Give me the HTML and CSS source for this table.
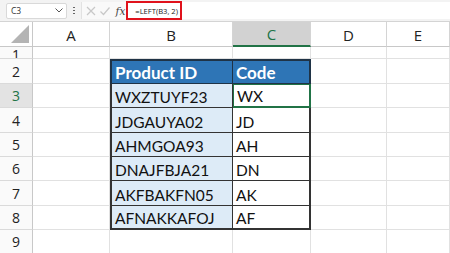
FILE: index.html
```html
<!DOCTYPE html>
<html>
<head>
<meta charset="utf-8">
<link rel="stylesheet" href="styles.css">
</head>
<body>
<div class="fbar">
  <div class="namebox"><span>C3</span>
    <svg class="chev" width="8" height="5" viewBox="0 0 8 5"><path d="M0.5 0.5 L4 4 L7.5 0.5" fill="none" stroke="#555" stroke-width="1"/></svg>
  </div>
  <div class="dots"><i></i><i></i><i></i></div>
  <div class="tools">
    <svg class="ic" width="12" height="12" viewBox="0 0 12 12"><path d="M2 2 L10 10 M10 2 L2 10" stroke="#c8c8c8" stroke-width="1.2"/></svg>
    <svg class="ic" width="12" height="12" viewBox="0 0 12 12"><path d="M1.5 6.5 L4.5 9.5 L10.5 2.5" fill="none" stroke="#c8c8c8" stroke-width="1.2"/></svg>
    <span class="fx">fx</span>
  </div>
  <div class="formula"><span class="fbox">=LEFT(B3, 2)</span></div>
</div>
<div class="sheet">
  <div class="corner"><div class="tri"></div></div>
  <div class="ch">A</div><div class="ch">B</div><div class="ch sel">C</div><div class="ch">D</div><div class="ch">E</div>

  <div class="rh r1"><span>1</span></div><div class="c r1"></div><div class="c r1"></div><div class="c r1"></div><div class="c r1"></div><div class="c r1"></div>

  <div class="rh">2</div><div class="c"></div><div class="c th tl">Product ID</div><div class="c th tr">Code</div><div class="c"></div><div class="c"></div>
  <div class="rh rsel">3</div><div class="c"></div><div class="c tb">WXZTUYF23</div><div class="c tc active">WX</div><div class="c"></div><div class="c"></div>
  <div class="rh">4</div><div class="c"></div><div class="c tb">JDGAUYA02</div><div class="c tc">JD</div><div class="c"></div><div class="c"></div>
  <div class="rh">5</div><div class="c"></div><div class="c tb">AHMGOA93</div><div class="c tc">AH</div><div class="c"></div><div class="c"></div>
  <div class="rh">6</div><div class="c"></div><div class="c tb">DNAJFBJA21</div><div class="c tc">DN</div><div class="c"></div><div class="c"></div>
  <div class="rh">7</div><div class="c"></div><div class="c tb">AKFBAKFN05</div><div class="c tc">AK</div><div class="c"></div><div class="c"></div>
  <div class="rh">8</div><div class="c"></div><div class="c tb last">AFNAKKAFOJ</div><div class="c tc last">AF</div><div class="c"></div><div class="c"></div>
  <div class="rh">9</div><div class="c"></div><div class="c"></div><div class="c"></div><div class="c"></div><div class="c"></div>
</div>
</body>
</html>
```
FILE: styles.css
```css
* { box-sizing: border-box; }
html, body { margin: 0; padding: 0; }
body {
  width: 450px; height: 253px; overflow: hidden;
  background: #fff;
  font-family: "Open Sans", "Liberation Sans", sans-serif;
}
.fbar {
  height: 22px;
  background: #f3f3f3;
  display: flex; align-items: center;
  padding-left: 6px;
  border-bottom: 1px solid #d4d4d4;
}
.namebox {
  width: 61px; height: 16px;
  background: #fff;
  border: 1px solid #d9d9d9;
  border-radius: 2px;
  display: flex; align-items: center; justify-content: space-between;
  padding: 0 3px 0 4px;
  font-size: 8.5px; color: #333;
}
.dots { display: flex; flex-direction: column; gap: 1.5px; margin: 0 6px 0 6px; }
.dots i { width: 1.5px; height: 1.5px; background: #666; display: block; }
.tools {
  display: flex; align-items: center;
  height: 17px;
  background: #f9f9f9;
  border-left: 1px solid #e2e2e2;
  padding-left: 3px;
}
.ic { margin-right: 2px; }
.fx {
  font-family: "DejaVu Serif", "Liberation Serif", serif;
  font-style: italic; font-size: 10.5px; color: #444;
  margin: 0 1px 0 3px;
}
.formula {
  flex: 1; height: 17px; background: #fff;
  display: flex; align-items: center;
}
.fbox {
  height: 19px;
  border: 2px solid #e0121c;
  padding: 0 2px 0 7px;
  font-size: 7.6px; color: #222;
  display: inline-flex; align-items: center;
}
.sheet {
  display: grid;
  grid-template-columns: 33px 77px 123px 78px 76px 63px;
  grid-template-rows: 25px 12px 25px 24px 25px 24px 24px 25px 24px 24px;
}
.corner {
  background: #fff;
  border-right: 1px solid #c8c8c8;
  border-bottom: 1px solid #c8c8c8;
  position: relative;
}
.tri {
  position: absolute; right: 3px; bottom: 3px;
  width: 0; height: 0;
  border-left: 18px solid transparent;
  border-bottom: 18px solid #b4b4b4;
}
.ch {
  background: #fff;
  border-right: 1px solid #d4d4d4;
  border-bottom: 1px solid #c8c8c8;
  display: flex; align-items: center; justify-content: center;
  font-size: 15px; color: #222;
  padding-top: 1px;
}
.ch.sel {
  background: #d2d2d2;
  border-bottom: 2px solid #217346;
  color: #217346;
}
.rh {
  background: #fafafa;
  border-right: 1px solid #c8c8c8;
  border-bottom: 1px solid #dadada;
  display: flex; align-items: center; justify-content: center;
  font-size: 14px; color: #222;
}
.rh.r1 { overflow: hidden; align-items: flex-end; }
.rh.r1 span { line-height: 12px; height: 12px; display: block; margin-bottom: -3px; }
.rh.rsel { background: #e3e3e3; color: #217346; }
.c {
  border-right: 1px solid #e1e1e1;
  border-bottom: 1px solid #e1e1e1;
  font-family: "Lato", "Open Sans", sans-serif;
  font-size: 15.5px; color: #111;
  display: flex; align-items: flex-end;
  padding: 0 0 1px 3px;
  white-space: nowrap;
}
.th {
  background: #2e75b6; color: #fff; font-weight: bold;
  font-size: 17px;
  border-top: 2px solid #1f3346;
  border-bottom: 1px solid #1f3346;
  padding-bottom: 0;
}
.th.tl { border-left: 2px solid #1f3346; border-right: 1px solid #1f3346; }
.th.tr { border-right: 2px solid #1f3346; }
.tb {
  background: #ddebf7;
  border-left: 2px solid #333;
  border-right: 1px solid #333;
  border-bottom: 1px solid #333;
}
.tc {
  border-right: 2px solid #333;
  border-bottom: 1px solid #333;
}
.last { border-bottom: 2px solid #333; }
.active {
  border: 1px solid #217346;
  border-right: 2px solid #217346;
  border-bottom: 2px solid #217346;
  padding-left: 3px;
}
```
